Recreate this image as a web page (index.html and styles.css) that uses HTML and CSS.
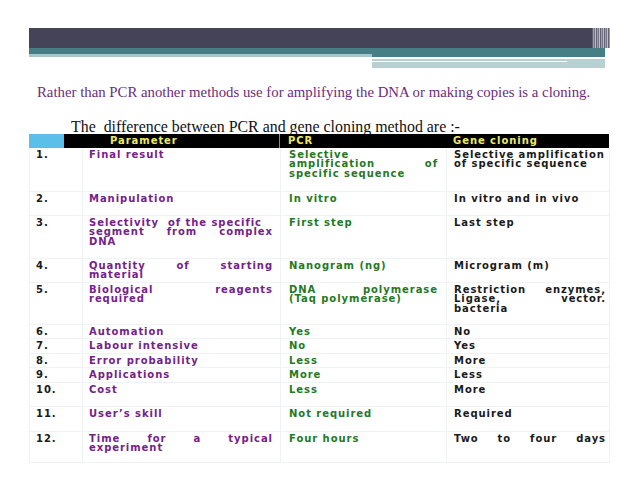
FILE: index.html
```html
<!DOCTYPE html>
<html>
<head>
<meta charset="utf-8">
<link rel="stylesheet" href="styles.css">
</head>
<body>
<div class="slide">
  <div class="banner">
    <div class="bar-dark">
      <div class="dark-solid"></div>
      <div class="dark-fade"></div>
    </div>
    <div class="bar-low">
      <div class="low-left">
        <div class="teal-thin"></div>
        <div class="teal-light"></div>
      </div>
      <div class="low-right">
        <div class="teal-thick"></div>
        <div class="gap-line"></div>
        <div class="pale-band"><div class="pale-inner"></div></div>
      </div>
    </div>
  </div>

  <p class="intro">Rather than PCR another methods use for amplifying the DNA or making copies is a cloning.</p>
  <p class="subtitle">The&nbsp; difference between PCR and gene cloning method are :-</p>

  <div class="table">
    <div class="thead">
      <div class="th-blue"></div>
      <div class="th th-param">Parameter</div>
      <div class="th-div"></div>
      <div class="th th-pcr">PCR</div>
      <div class="th th-gene">Gene cloning</div>
    </div>
    <div class="tbody">
      <div class="c num">1.</div>
      <div class="c par"><span class="ln">Final result</span></div>
      <div class="c pcr"><span class="ln">Selective</span><span class="jl">amplification of</span><span class="ln">specific sequence</span></div>
      <div class="c gen"><span class="ln">Selective amplification</span><span class="ln">of specific sequence</span></div>

      <div class="c num">2.</div>
      <div class="c par"><span class="ln">Manipulation</span></div>
      <div class="c pcr"><span class="ln">In vitro</span></div>
      <div class="c gen"><span class="ln">In vitro and in vivo</span></div>

      <div class="c num">3.</div>
      <div class="c par"><span class="ln">Selectivity &nbsp;of the specific</span><span class="jl">segment from complex</span><span class="ln">DNA</span></div>
      <div class="c pcr"><span class="ln">First step</span></div>
      <div class="c gen"><span class="ln">Last step</span></div>

      <div class="c num">4.</div>
      <div class="c par"><span class="jl">Quantity of starting</span><span class="ln">material</span></div>
      <div class="c pcr"><span class="ln">Nanogram (ng)</span></div>
      <div class="c gen"><span class="ln">Microgram (m)</span></div>

      <div class="c num">5.</div>
      <div class="c par"><span class="jl">Biological reagents</span><span class="ln">required</span></div>
      <div class="c pcr"><span class="jl">DNA polymerase</span><span class="ln">(Taq polymerase)</span></div>
      <div class="c gen"><span class="jl">Restriction enzymes,</span><span class="jl">Ligase, vector.</span><span class="ln">bacteria</span></div>

      <div class="c num">6.</div>
      <div class="c par"><span class="ln">Automation</span></div>
      <div class="c pcr"><span class="ln">Yes</span></div>
      <div class="c gen"><span class="ln">No</span></div>

      <div class="c num">7.</div>
      <div class="c par"><span class="ln">Labour intensive</span></div>
      <div class="c pcr"><span class="ln">No</span></div>
      <div class="c gen"><span class="ln">Yes</span></div>

      <div class="c num">8.</div>
      <div class="c par"><span class="ln">Error probability</span></div>
      <div class="c pcr"><span class="ln">Less</span></div>
      <div class="c gen"><span class="ln">More</span></div>

      <div class="c num">9.</div>
      <div class="c par"><span class="ln">Applications</span></div>
      <div class="c pcr"><span class="ln">More</span></div>
      <div class="c gen"><span class="ln">Less</span></div>

      <div class="c num">10.</div>
      <div class="c par"><span class="ln">Cost</span></div>
      <div class="c pcr"><span class="ln">Less</span></div>
      <div class="c gen"><span class="ln">More</span></div>

      <div class="c num">11.</div>
      <div class="c par"><span class="ln">User’s skill</span></div>
      <div class="c pcr"><span class="ln">Not required</span></div>
      <div class="c gen"><span class="ln">Required</span></div>

      <div class="c num">12.</div>
      <div class="c par"><span class="jl">Time for a typical</span><span class="ln">experiment</span></div>
      <div class="c pcr"><span class="ln">Four hours</span></div>
      <div class="c gen"><span class="jl">Two to four days</span></div>
    </div>
  </div>
</div>
</body>
</html>
```

FILE: styles.css
```css
* { box-sizing: border-box; }
html, body { margin: 0; padding: 0; background: #ffffff; }
.slide { width: 638px; height: 493px; overflow: hidden; position: relative; }

/* banner */
.banner { margin: 28px 0 0 29px; width: 581px; }
.bar-dark { display: flex; height: 20px; }
.dark-solid { width: 563px; background: #444358; }
.dark-fade {
  width: 18px;
  background: repeating-linear-gradient(90deg, #47465b 0 1px, #8d8c9c 1px 2px, #5e5d70 2px 3px, #b3b2bd 3px 4px);
  opacity: 0.85;
}
.bar-low { display: flex; }
.low-left { width: 343px; }
.teal-thin { height: 6px; background: #457f85; }
.teal-light { height: 3px; background: #a9c5c8; }
.low-right { width: 233px; }
.teal-thick { height: 9px; background: #457f85; }
.gap-line { height: 2px; background: #ffffff; }
.pale-band { height: 9px; background: #b9d0d2; padding-top: 2px; }
.pale-inner { height: 1px; width: 195px; background: #ffffff; }

/* text */
.intro {
  margin: 16px 0 0 37px;
  font-family: "Liberation Serif", "Times New Roman", serif;
  font-size: 14.8px;
  line-height: 16px;
  color: #6d2c7d;
  white-space: nowrap;
}
.subtitle {
  margin: 19px 0 -1px 71px;
  font-family: "Liberation Serif", "Times New Roman", serif;
  font-size: 15.9px;
  line-height: 16px;
  color: #111111;
  white-space: nowrap;
}

/* table */
.table {
  position: relative;
  margin-left: 29px;
  width: 580px;
  font-family: "DejaVu Sans", Verdana, sans-serif;
  font-weight: bold;
  font-size: 10px;
  letter-spacing: 0.95px;
}
.thead {
  display: grid;
  grid-template-columns: 35px 215px 1px 166px 163px;
  height: 14px;
}
.th-blue { background: #5cbfea; }
.th { background: #000000; color: #ecea6c; line-height: 14px; white-space: nowrap; }
.th-param { padding-left: 46px; }
.th-div { background: #8a8a8a; }
.th-pcr { padding-left: 8px; }
.th-gene { padding-left: 7px; }

.tbody {
  display: grid;
  grid-template-columns: 53px 198px 166px 163px;
  grid-template-rows: 43.5px 24.5px 43px 24px 41.5px 14.5px 14.5px 14.5px 14.5px 24.5px 25px 31px;
  border-left: 1px solid #f0f3f5;
}
.c {
  border-right: 1px solid #f0f3f5;
  border-bottom: 1px solid #f0f3f5;
  padding-top: 2px;
  line-height: 9.3px;
}
.ln { display: block; white-space: nowrap; }
.jl { display: block; white-space: nowrap; text-align: justify; text-align-last: justify; }
.num { padding-left: 6px; color: #1a1a1a; }
.par { padding: 2px 7px 0 6px; color: #74228a; }
.pcr { padding: 2px 8px 0 8px; color: #24791f; }
.gen { padding: 2px 3px 0 7px; color: #1a1a1a; }
```
